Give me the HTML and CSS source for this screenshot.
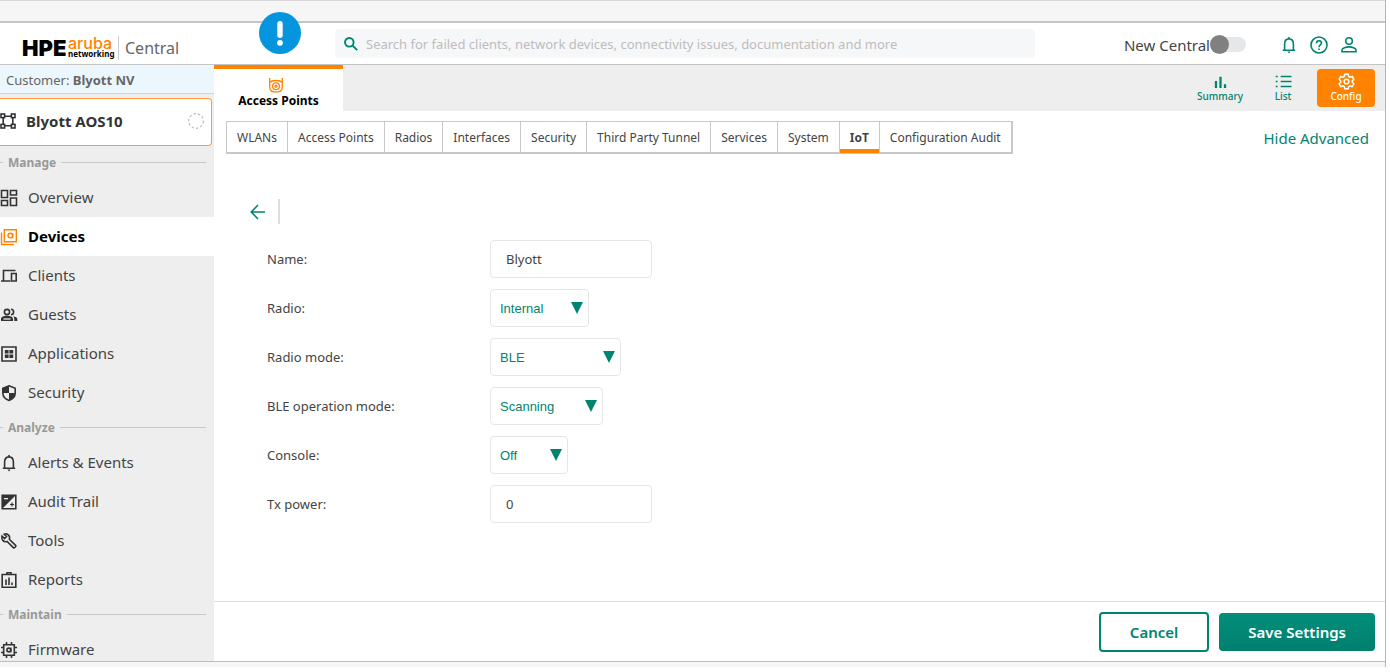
FILE: index.html
```html
<!DOCTYPE html>
<html lang="en">
<head>
<meta charset="utf-8">
<meta name="viewport" content="width=device-width, initial-scale=1">
<title>HPE Aruba Networking Central</title>
<link rel="stylesheet" href="styles.css">
</head>
<body>
<div class="app">
  <div class="strip"></div>

  <header class="header">
    <div class="brand">
      <span class="brand-hpe">HPE</span>
      <span class="brand-stack"><span class="brand-aruba">aruba</span><span class="brand-net">networking</span></span>
      <span class="brand-product">Central</span>
    </div>
    <label class="search">
      <svg class="search-icon" viewBox="0 0 14 14" aria-label="Search"><circle cx="5.3" cy="5.3" r="4.3"/><path d="M8.6 8.6l4.6 4.6"/></svg>
      <input class="search-input" type="search" placeholder="Search for failed clients, network devices, connectivity issues, documentation and more">
    </label>
    <div class="tools">
      <label class="toggle">New Central<input class="switch" type="checkbox"></label>
      <button class="tool" aria-label="Notifications"><svg viewBox="0 0 18 18"><path d="M2.8 14.2h12.4M4.6 14V8.2C4.6 5 6.4 2.9 9 2.9S13.4 5 13.4 8.2V14M9 1v2"/><path d="M7.400 15.500h3.200L9 17.600z" class="solid"/></svg></button>
      <button class="tool" aria-label="Help"><svg viewBox="0 0 18 18"><circle cx="9" cy="9" r="8"/><path d="M6.500 7.200C6.500 5.600 7.600 4.700 9 4.700s2.500 1 2.500 2.300C11.500 8.900 9 9 9 11.200M9 12.500v1.600"/></svg></button>
      <button class="tool" aria-label="Account"><svg viewBox="0 0 18 18"><circle cx="9" cy="5" r="3.300"/><path d="M2 15.800v-1.900c0-2 4.300-3 7-3s7 1 7 3v1.900z"/></svg></button>
    </div>
    <svg class="notice" viewBox="0 0 42 42" role="img" aria-label="Notice"><circle cx="21" cy="21" r="21" fill="#0595df"/><rect x="18.300" y="9" width="5.400" height="17" rx="2.700" fill="#fff"/><circle cx="21" cy="30.800" r="2.900" fill="#fff"/></svg>
  </header>

  <div class="body">
    <aside class="sidebar">
      <div class="customer">Customer: <b>Blyott NV</b></div>
      <button class="group">
        <svg class="group-icon" viewBox="0 0 16 16"><path d="M3.200 4.500v7M12.800 4.500v7M4.500 3.200h7M4.500 12.800h7"/><rect x="1" y="1" width="3.600" height="3.600"/><rect x="11.400" y="1" width="3.600" height="3.600"/><rect x="1" y="11.400" width="3.600" height="3.600"/><rect x="11.400" y="11.400" width="3.600" height="3.600"/></svg>
        <span class="group-name">Blyott AOS10</span>
        <svg class="group-status" viewBox="0 0 16 16"><circle cx="8" cy="8" r="7.300"/></svg>
      </button>
      <nav class="nav">
        <h2 class="section">Manage</h2>
        <a class="item" href="#"><svg class="icon" viewBox="0 0 18 18"><path d="M1.500 1.500h6v7h-6zM10.500 1.500h6v4.500h-6zM10.500 9h6v7.500h-6zM1.500 11.500h6v5h-6z"/></svg>Overview</a>
        <a class="item item-active" href="#"><svg class="icon" viewBox="0 0 18 18"><path d="M4.300 1.800h12v12h-12zM1.500 4.500v12H14"/><circle cx="10.300" cy="7.600" r="2.300"/><path d="M12.700 5v5.500"/></svg>Devices</a>
        <a class="item" href="#"><svg class="icon" viewBox="0 0 18 18"><path d="M15.500 3.500h-12v10M1 14h9.500"/><path d="M11.500 6.500h4.700V14h-4.700z"/></svg>Clients</a>
        <a class="item" href="#"><svg class="icon" viewBox="0 0 18 18"><circle cx="7" cy="6" r="2.600"/><path d="M11 3.200c3.500 0 3.500 5.400 0 5.400"/><path class="solid" d="M1 15v-2c0-2.500 3-3.300 6-3.300s6 .8 6 3.300v2zM14.300 15v-2c0-1-.4-2-1.200-2.800 2.400.4 4.200 1.300 4.200 2.800v2z"/><path class="light" d="M3.500 13h7"/></svg>Guests</a>
        <a class="item" href="#"><svg class="icon" viewBox="0 0 18 18"><path d="M2 2h14v14H2z"/><path class="solid" d="M4.800 5h3.800v3.600H4.800zM9.400 5h3.800v3.600H9.400zM4.800 9.400h3.800V13H4.800zM9.400 9.400h3.800V13H9.400z"/></svg>Applications</a>
        <a class="item" href="#"><svg class="icon" viewBox="0 0 18 18"><path d="M9 1.800l6.200 2.400v4.500c0 3.700-2.500 6.400-6.200 7.700-3.700-1.300-6.200-4-6.200-7.700V4.200z"/><path class="solid" d="M9 1.500V9h6.300C15 12.700 12.500 15.300 9 16.500V9H2.700V4.200z"/></svg>Security</a>
        <h2 class="section">Analyze</h2>
        <a class="item" href="#"><svg class="icon" viewBox="0 0 18 18"><path d="M2.800 14.200h12.400M4.600 14V8.200C4.600 5 6.400 2.900 9 2.900S13.400 5 13.400 8.200V14M9 1v2"/><path d="M7.400 15.500h3.200L9 17.400z" class="solid"/></svg>Alerts &amp; Events</a>
        <a class="item" href="#"><svg class="icon" viewBox="0 0 18 18"><path d="M2.200 2.200h13.600v13.600H2.200z"/><path class="solid" d="M2 2h14L2 16z"/><path class="light" d="M4 5.700h4"/><path class="thin" d="M12 9.500v4M10 11.500h4"/></svg>Audit Trail</a>
        <a class="item" href="#"><svg class="icon" viewBox="0 0 18 18"><path d="M2 4l2.500 2.500 2-2L4.200 2.200c2.800-1.100 6.300 1 5.200 5l6.400 6.400c.6.600-1.700 2.900-2.300 2.300L7.100 9.500C3.500 10.600.8 7.200 2 4z"/></svg>Tools</a>
        <a class="item" href="#"><svg class="icon" viewBox="0 0 18 18"><path d="M2.200 3.500h13.600v12.800H2.200z"/><path d="M7 3V1.800h4V3M6 8.500V14M9 6.500V14M12 11.500V14"/></svg>Reports</a>
        <h2 class="section">Maintain</h2>
        <a class="item" href="#"><svg class="icon" viewBox="0 0 18 18"><path d="M3.700 3.700h10.600v10.600H3.700zM6.500 1v2.500M11.500 1v2.500M6.500 14.500V17M11.500 14.500V17M1 6.500h2.500M1 11.500h2.500M14.500 6.500H17M14.500 11.500H17"/><circle cx="8.800" cy="9" r="1.900"/><path class="thin" d="M11 6.500v5"/></svg>Firmware</a>
      </nav>
    </aside>

    <main class="main">
      <div class="context">
        <a class="context-tab" href="#">
          <svg class="ap-icon" viewBox="0 0 16 16"><path d="M1.700 1v8.500C1.700 13 3.500 14.800 6 14.800h4c2.500 0 4.300-1.800 4.300-5.300V1M1.700 5.500C3 4 5 3.500 8 3.500s5 .5 6.300 2"/><circle cx="8" cy="9.200" r="3.400"/><circle cx="8" cy="9.200" r="1"/></svg>
          Access Points
        </a>
        <div class="views">
          <button class="view"><svg viewBox="0 0 18 18"><path class="bars" d="M4.200 16V8.500M9 16V4M13.800 16v-4"/></svg>Summary</button>
          <button class="view"><svg viewBox="0 0 18 18"><path d="M6 3.700h11.500M6 9h11.500M6 14.300h11.500M.8 3.700h2M.8 9h2M.8 14.300h2"/></svg>List</button>
          <button class="view view-active"><svg viewBox="0 0 18 18"><path d="M7.200 1.300h3.600l.5 2.300 1.400.8 2.300-.7 1.800 3-1.700 1.600v1.500l1.700 1.600-1.800 3-2.300-.7-1.400.8-.5 2.300H7.200l-.5-2.300-1.400-.8-2.300.7-1.800-3 1.700-1.600V8.300L1.200 6.700l1.800-3 2.300.7 1.400-.8z"/><circle cx="9" cy="9" r="2.500"/></svg>Config</button>
        </div>
      </div>

      <div class="subbar">
        <nav class="tabs">
          <a class="tab" href="#">WLANs</a><a class="tab" href="#">Access Points</a><a class="tab" href="#">Radios</a><a class="tab" href="#">Interfaces</a><a class="tab" href="#">Security</a><a class="tab" href="#">Third Party Tunnel</a><a class="tab" href="#">Services</a><a class="tab" href="#">System</a><a class="tab tab-active" href="#">IoT</a><a class="tab" href="#">Configuration Audit</a>
        </nav>
        <a class="advanced" href="#">Hide Advanced</a>
      </div>

      <div class="content">
        <div class="back-row"><button class="back" aria-label="Back"><svg viewBox="0 0 16 16"><path d="M15 8H1.500M8 1L1.200 8 8 15"/></svg></button></div>
        <form class="form">
          <label class="label" for="name">Name:</label>
          <input class="text" id="name" type="text" value="Blyott">
          <label class="label" for="radio">Radio:</label>
          <span class="select select-internal"><select id="radio"><option>Internal</option></select><svg class="arrow" viewBox="0 0 12 12"><path d="M0 0h12L6 12z"/></svg></span>
          <label class="label" for="mode">Radio mode:</label>
          <span class="select select-mode"><select id="mode"><option>BLE</option></select><svg class="arrow" viewBox="0 0 12 12"><path d="M0 0h12L6 12z"/></svg></span>
          <label class="label" for="operation">BLE operation mode:</label>
          <span class="select select-operation"><select id="operation"><option>Scanning</option></select><svg class="arrow" viewBox="0 0 12 12"><path d="M0 0h12L6 12z"/></svg></span>
          <label class="label" for="console">Console:</label>
          <span class="select select-console"><select id="console"><option>Off</option></select><svg class="arrow" viewBox="0 0 12 12"><path d="M0 0h12L6 12z"/></svg></span>
          <label class="label" for="power">Tx power:</label>
          <input class="text" id="power" type="text" value="0">
        </form>
      </div>

      <footer class="actions">
        <button class="btn btn-cancel">Cancel</button>
        <button class="btn btn-save">Save Settings</button>
      </footer>
    </main>
  </div>
  <div class="base"></div>
</div>
</body>
</html>
```
FILE: styles.css
```css
* { box-sizing: border-box; }

:root {
  --green: #01846f;
  --orange: #ff8300;
  --gray: #eeeeee;
  --line: #c8c8c8;
  --ink: #444444;
}

body {
  margin: 0;
  background: #fff;
  color: var(--ink);
  font-family: "Noto Sans", "Open Sans", sans-serif;
  font-size: 13px;
}

a { color: inherit; text-decoration: none; }
button, input, select { font: inherit; color: inherit; }
button { background: none; border: 0; padding: 0; cursor: pointer; }
svg { fill: none; stroke: currentColor; stroke-width: 1.6; display: block; flex: none; }
svg .solid { fill: currentColor; stroke: none; }

.app {
  display: flex;
  flex-direction: column;
  height: calc(100vh - 5px);
  margin-right: 4px;
  border-right: 1px solid #b4b4b4;
  overflow: hidden;
}

.strip { flex: none; height: 23px; background: #f6f6f6; border-top: 1px solid #d8d8d8; border-bottom: 2px solid #c4c4c4; }
.base { flex: none; height: 6px; background: #f6f6f6; border-top: 1px solid #bdbdbd; }

/* Header */
.header {
  position: relative;
  display: flex;
  align-items: center;
  flex: none;
  height: 42px;
  padding: 0 27px 0 22px;
  border-bottom: 1px solid #c4c4c4;
}
.brand { display: flex; align-items: center; width: 313px; padding-top: 8px; }
.brand-hpe { width: 46px; color: #000; font: 900 22px/24px Inter, sans-serif; }
.brand-stack { display: flex; flex-direction: column; width: 50px; }
.brand-aruba { color: var(--orange); font: 500 16px/12px Inter, sans-serif; }
.brand-net { color: #000; font: 700 8px/10px "Noto Sans", sans-serif; }
.brand-product { padding-left: 6px; border-left: 1px solid #ccc; font-size: 16px; line-height: 24px; color: #666; }

.search { display: flex; align-items: center; gap: 8px; flex: 0 1 700px; height: 29px; padding: 0 9px; background: #f6f7f9; border-radius: 4px; }
.search-icon { width: 14px; height: 14px; color: var(--green); stroke-width: 1.9; }
.search-input { flex: 1; min-width: 0; padding: 0; border: 0; outline: 0; background: none; }
.search-input::placeholder { color: #bdbdbd; opacity: 1; }

.tools { display: flex; align-items: center; gap: 12px; margin-left: auto; padding-top: 2px; }
.toggle { display: flex; align-items: center; margin-right: 22px; font-size: 15px; }
.switch { appearance: none; display: flex; align-items: center; width: 36px; height: 15px; margin: 0; border-radius: 8px; background: #e6e7e9; }
.switch::before { content: ""; width: 19px; height: 19px; border-radius: 50%; background: #808080; }
.tool { color: var(--green); }
.tool svg { width: 18px; height: 18px; }
.notice { position: absolute; left: 259px; top: -11px; width: 42px; height: 42px; stroke: none; }

/* Sidebar */
.body { display: flex; flex: 1; min-height: 0; }
.sidebar { flex: none; width: 214px; background: var(--gray); overflow: hidden; }
.customer { padding-left: 6px; height: 29px; line-height: 31px; background: #ebf6fd; border-bottom: 1px solid #d0d5d8; color: #666; }
.group {
  display: flex;
  align-items: center;
  width: 212px;
  height: 48px;
  margin: 4px 0 1px;
  padding: 0 7px 2px 0;
  background: #fff;
  border: 1px solid #ff9a3d;
  border-left: 0;
  border-radius: 0 4px 4px 0;
}
.group-icon { width: 16px; height: 16px; color: #333; }
.group-name { flex: 1; padding-left: 10px; text-align: left; font-size: 15px; font-weight: 700; color: #333; }
.group-status { width: 16px; height: 16px; color: #bbb; stroke-dasharray: 2.5 2; stroke-width: 1.2; }

.section { display: flex; align-items: center; gap: 5px; height: 31px; margin: 0; padding-right: 8px; color: #999; font-size: 12px; font-weight: 700; }
.section::before { content: ""; width: 3px; height: 1px; background: var(--line); }
.section::after { content: ""; flex: 1; height: 1px; background: var(--line); }
.item { display: flex; align-items: center; gap: 10px; height: 39px; padding-bottom: 2px; font-size: 15px; }
.icon { width: 18px; height: 18px; margin-top: 2px; color: #333; }
.icon .light { stroke: #fff; stroke-width: 1.2; }
.icon .thin { stroke-width: 1.2; }
.item-active { background: #fff; color: #000; font-weight: 700; }
.item-active .icon { color: var(--orange); stroke-width: 1.4; }

/* Main column */
.main { display: flex; flex-direction: column; flex: 1; min-width: 0; }
.context { display: flex; justify-content: space-between; flex: none; height: 46px; background: var(--gray); }
.context-tab { display: flex; flex-direction: column; align-items: center; width: 129px; padding-top: 8px; border-top: 4px solid var(--orange); background: #fff; color: #000; font-size: 12px; line-height: 15px; font-weight: 700; }
.ap-icon { width: 16px; height: 16px; margin-right: 6px; color: var(--orange); stroke-width: 1.3; }
.views { display: flex; align-items: center; gap: 5px; padding-right: 10px; }
.view { display: flex; flex-direction: column; align-items: center; justify-content: center; width: 58px; height: 38px; border-radius: 4px; color: var(--green); font-size: 10px; line-height: 13px; font-weight: 500; }
.view svg { width: 17px; height: 17px; }
.view .bars { stroke-width: 2.4; }
.view-active { background: var(--orange); color: #fff; }

.subbar { display: flex; align-items: center; justify-content: space-between; flex: none; padding: 10px 16px 0 12px; }
.tabs { display: flex; border: 1px solid var(--line); border-right-width: 2px; border-bottom-width: 2px; }
.tab { height: 30px; padding: 0 10px; font-size: 12px; line-height: 31px; white-space: nowrap; }
.tab + .tab { border-left: 1px solid var(--line); }
.tab-active { height: 31px; margin-bottom: -1px; font-weight: 700; box-shadow: inset 0 -4px var(--orange); }
.advanced { color: var(--green); font-size: 15px; }

.content { flex: 1; min-height: 0; padding: 45px 36px 0; overflow: hidden; }
.back-row { display: flex; height: 25px; }
.back { padding-right: 12px; border-right: 2px solid #ddd; color: var(--green); }
.back svg { width: 16px; height: 16px; }
.form { display: grid; grid-template-columns: 223px 1fr; row-gap: 11px; justify-items: start; align-items: center; padding: 16px 17px 0; }
.text { width: 162px; height: 38px; padding: 0 15px; border: 1px solid #e6e6e6; border-radius: 4px; background: #fff; outline: 0; }
.select { display: grid; align-items: center; height: 38px; border: 1px solid #e6e6e6; border-radius: 4px; color: var(--green); }
.select select { grid-area: 1 / 1; appearance: none; width: 100%; height: 36px; padding: 0 28px 0 9px; border: 0; outline: 0; background: none; font-family: "Liberation Sans", Arial, sans-serif; }
.arrow { grid-area: 1 / 1; justify-self: end; width: 12px; height: 12px; margin-right: 5px; fill: var(--green); stroke: none; pointer-events: none; }
.select-internal { width: 99px; }
.select-mode { width: 131px; }
.select-operation { width: 113px; }
.select-console { width: 78px; }

.actions { display: flex; justify-content: flex-end; align-items: center; gap: 10px; flex: none; height: 60px; padding-right: 10px; border-top: 1px solid #ddd; }
.btn { height: 38px; padding: 0 29px; border-radius: 4px; font-size: 15px; font-weight: 600; }
.btn-cancel { height: 40px; border: 2px solid var(--green); color: var(--green); }
.btn-save { background: linear-gradient(#018f7b, #017f6e); color: #fff; }
```
